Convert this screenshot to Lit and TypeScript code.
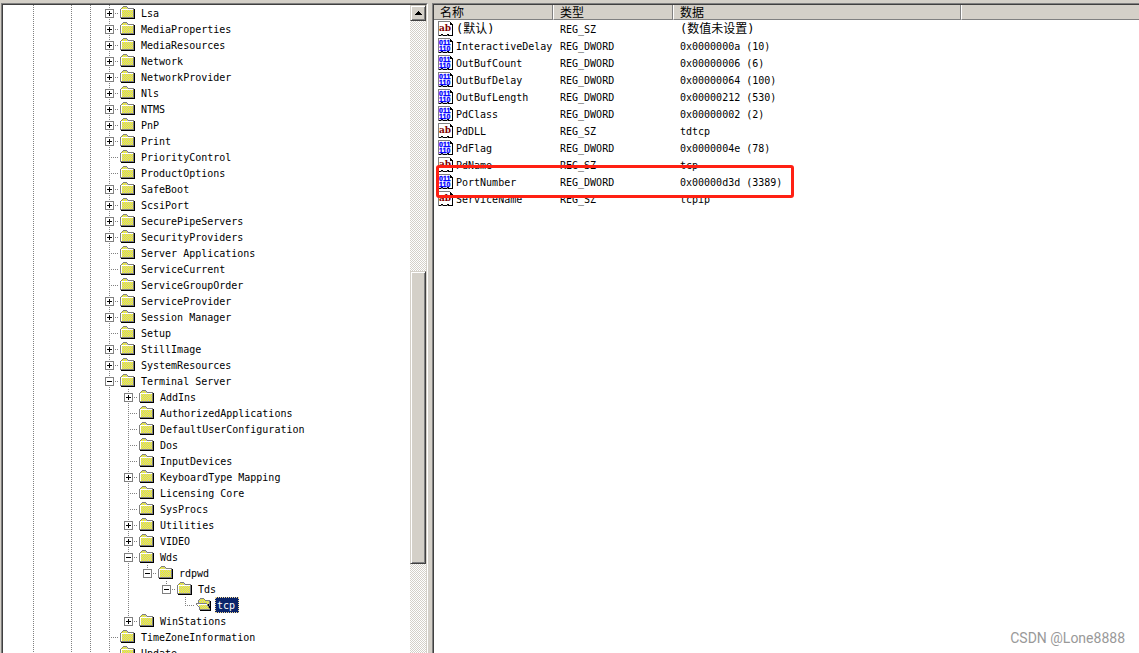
import { LitElement, html, svg, css, nothing } from "lit";
import { customElement, state } from "lit/decorators.js";
import { classMap } from "lit/directives/class-map.js";

interface KeyNode {
  name: string;
  closed?: boolean;
  children?: KeyNode[];
}

type Guide = "line" | "none";

const leaf = (name: string): KeyNode => ({ name });
const shut = (name: string): KeyNode => ({ name, closed: true });

const KEYS: KeyNode[] = [
  shut("Lsa"),
  shut("MediaProperties"),
  shut("MediaResources"),
  shut("Network"),
  shut("NetworkProvider"),
  shut("Nls"),
  shut("NTMS"),
  shut("PnP"),
  shut("Print"),
  leaf("PriorityControl"),
  leaf("ProductOptions"),
  shut("SafeBoot"),
  shut("ScsiPort"),
  shut("SecurePipeServers"),
  shut("SecurityProviders"),
  leaf("Server Applications"),
  leaf("ServiceCurrent"),
  leaf("ServiceGroupOrder"),
  shut("ServiceProvider"),
  shut("Session Manager"),
  leaf("Setup"),
  shut("StillImage"),
  shut("SystemResources"),
  {
    name: "Terminal Server",
    children: [
      shut("AddIns"),
      leaf("AuthorizedApplications"),
      leaf("DefaultUserConfiguration"),
      leaf("Dos"),
      leaf("InputDevices"),
      shut("KeyboardType Mapping"),
      leaf("Licensing Core"),
      leaf("SysProcs"),
      shut("Utilities"),
      shut("VIDEO"),
      {
        name: "Wds",
        children: [{ name: "rdpwd", children: [{ name: "Tds", children: [leaf("tcp")] }] }],
      },
      shut("WinStations"),
    ],
  },
  leaf("TimeZoneInformation"),
  leaf("Update"),
];

const VALUES: [string, string, string][] = [
  ["(默认)", "REG_SZ", "(数值未设置)"],
  ["InteractiveDelay", "REG_DWORD", "0x0000000a (10)"],
  ["OutBufCount", "REG_DWORD", "0x00000006 (6)"],
  ["OutBufDelay", "REG_DWORD", "0x00000064 (100)"],
  ["OutBufLength", "REG_DWORD", "0x00000212 (530)"],
  ["PdClass", "REG_DWORD", "0x00000002 (2)"],
  ["PdDLL", "REG_SZ", "tdtcp"],
  ["PdFlag", "REG_DWORD", "0x0000004e (78)"],
  ["PdName", "REG_SZ", "tcp"],
  ["PortNumber", "REG_DWORD", "0x00000d3d (3389)"],
  ["ServiceName", "REG_SZ", "tcpip"],
];

const MARKED = "PortNumber";

const dither = svg`<defs>
  <pattern id="dither" width="2" height="2" patternUnits="userSpaceOnUse">
    <rect width="2" height="2" fill="#ffff00"/>
    <rect width="1" height="1" fill="#c0c0c0"/>
    <rect x="1" y="1" width="1" height="1" fill="#c0c0c0"/>
  </pattern>
</defs>`;

const folderIcon = html`<svg class="icon" viewBox="0 0 16 16" width="16" height="16" shape-rendering="crispEdges" aria-hidden="true">
  ${dither}
  <path d="M3 1h4v1h1v1h6v10H0V4h1V3h1V2h1z" fill="#808080"/>
  <path d="M3 2h4v1h1v1h5v8H1V4h1V3h1z" fill="url(#dither)"/>
  <path d="M1 4h12v1H2v7H1z" fill="#fff"/>
  <path d="M14 4h1v10H1v-1h13z" fill="#000"/>
</svg>`;

const openFolderIcon = html`<svg class="icon" viewBox="0 0 16 16" width="16" height="16" shape-rendering="crispEdges" aria-hidden="true">
  ${dither}
  <path d="M4 1h4v1h1v1h5v10H3V9H2V3h1V2h1z" fill="#808080"/>
  <path d="M4 2h4v1h1v1h4v8H3V3h1z" fill="url(#dither)"/>
  <path d="M0 6h11v1h1v2h1v2h1v2H4v-1H3v-2H2V9H1V8H0z" fill="#808080"/>
  <path d="M1 7h10v2h1v2h1v1H4v-2H3V9H2V8H1z" fill="url(#dither)"/>
  <path d="M1 7h10v1H3v1H2V8H1z" fill="#fff"/>
  <path d="M14 4h1v10H4v-1h10v-2h-1V9h-1V7h1v2h1z" fill="#000"/>
</svg>`;

const page = svg`
  <path d="M0 0h12v1h1v1h1v13H0z" fill="#808080"/>
  <path d="M1 1h11v2h2v11h-3v-1H9v1H5v-1H3v1H1z" fill="#fff"/>
  <path d="M12 1h1v1h1v1h1v12h-3v-1h2V4h-2z" fill="#000"/>
  <path d="M1 14h2v-1h2v1h4v-1h2v1h2v1h-3v-1H9v1H5v-1H3v1H1z" fill="#000"/>`;

const stringIcon = html`<svg class="icon" viewBox="0 0 16 16" width="16" height="16" shape-rendering="crispEdges" aria-hidden="true">
  ${page}<text class="ab" x="1" y="10">ab</text>
</svg>`;

const binaryIcon = html`<svg class="icon" viewBox="0 0 16 16" width="16" height="16" shape-rendering="crispEdges" aria-hidden="true">
  ${page}<text class="bits" x="1" y="7">011</text><text class="bits" x="1" y="13">110</text>
</svg>`;

@customElement("registry-tree")
class RegistryTree extends LitElement {
  @state() private collapsed = new Set<string>();
  @state() private selected = "tcp";

  static styles = css`
    :host {
      display: flex;
      min-height: 0;
      min-width: 0;
      background: #fff;
      border: 1px solid #808080;
      border-right-color: #fff;
      border-bottom: 0;
      box-sizing: border-box;
    }
    .frame {
      display: flex;
      flex: 1;
      min-width: 0;
      border: 1px solid #404040;
      border-right-color: #d4d0c8;
      border-bottom: 0;
    }
    .tree {
      flex: 1;
      min-width: 0;
      padding-left: 21px;
      overflow: auto;
      scrollbar-width: none;
    }
    .row {
      display: flex;
      height: 16px;
      line-height: 18px;
      white-space: pre;
    }
    .cell {
      flex: none;
      display: grid;
      place-items: center;
      width: 19px;
      height: 16px;
      padding: 1px 0 0;
      box-sizing: border-box;
      background-repeat: no-repeat;
    }
    .line,
    .branch {
      background-image: repeating-linear-gradient(to bottom, #808080 0 1px, transparent 1px 2px);
      background-size: 1px 16px;
      background-position: 9px 0;
    }
    .branch {
      background-image: repeating-linear-gradient(to bottom, #808080 0 1px, transparent 1px 2px),
        repeating-linear-gradient(to right, #808080 0 1px, transparent 1px 2px);
      background-size: 1px 16px, 10px 1px;
      background-position: 9px 0, 9px 8px;
    }
    .branch.end {
      background-size: 1px 9px, 10px 1px;
    }
    .toggle {
      display: block;
      width: 9px;
      height: 9px;
      padding: 0;
      border: 1px solid #808080;
      outline: 1px solid #fff;
      background: linear-gradient(#000, #000) center / 5px 1px no-repeat #fff;
    }
    .toggle.closed {
      background: linear-gradient(#000, #000) center / 5px 1px no-repeat,
        linear-gradient(#000, #000) center / 1px 5px no-repeat #fff;
    }
    .icon {
      flex: none;
      display: block;
      margin: 0 3px 0 1px;
    }
    .label {
      height: 16px;
      padding: 0 4px 0 2px;
    }
    .selected .label {
      background: #0a246a;
      color: #fff;
      outline: 1px dotted #f5db95;
      outline-offset: -1px;
    }
    .scrollbar {
      flex: none;
      display: flex;
      flex-direction: column;
      width: 16px;
      background: repeating-conic-gradient(#d4d0c8 0 25%, #fff 0 50%) 0 0 / 2px 2px;
    }
    .up,
    .thumb {
      box-sizing: border-box;
      background: #d4d0c8;
      border: 1px solid;
      border-color: #d4d0c8 #404040 #404040 #d4d0c8;
      box-shadow: inset 1px 1px #fff, inset -1px -1px #808080;
    }
    .up {
      display: grid;
      place-items: center;
      height: 16px;
      padding: 0;
    }
    .before {
      flex: 251;
    }
    .thumb {
      flex: 292;
    }
    .after {
      flex: 89;
    }
  `;

  private toggle(name: string) {
    const next = new Set(this.collapsed);
    if (!next.delete(name)) next.add(name);
    this.collapsed = next;
  }

  private renderNode(node: KeyNode, guides: Guide[], last: boolean): unknown {
    const closed = node.closed || this.collapsed.has(node.name);
    const expandable = node.closed || !!node.children;
    const isSelected = this.selected === node.name;
    return html`
      <div
        class=${classMap({ row: true, selected: isSelected })}
        role="treeitem"
        aria-level=${guides.length}
        aria-selected=${isSelected}
        aria-expanded=${expandable ? String(!closed) : nothing}
        @click=${() => (this.selected = node.name)}
      >
        ${guides.map((g) => html`<span class="cell ${g}"></span>`)}
        <span class=${classMap({ cell: true, branch: true, end: last })}
          >${expandable
            ? html`<button
                class=${classMap({ toggle: true, closed: !!closed })}
                aria-label=${node.name}
                @click=${() => this.toggle(node.name)}
              ></button>`
            : nothing}</span
        >${isSelected ? openFolderIcon : folderIcon}<span class="label">${node.name}</span>
      </div>
      ${closed || !node.children
        ? nothing
        : this.renderNodes(node.children, [...guides, last ? "none" : "line"])}
    `;
  }

  private renderNodes(nodes: KeyNode[], guides: Guide[], more = false): unknown {
    return nodes.map((n, i) => this.renderNode(n, guides, !more && i === nodes.length - 1));
  }

  render() {
    return html`
      <div class="frame">
        <div class="tree" role="tree">
          ${this.renderNodes(KEYS, ["line", "none", "line", "line"], true)}
        </div>
        <div class="scrollbar">
          <button class="up" aria-label="Scroll up">
            <svg viewBox="0 0 7 4" width="7" height="4" shape-rendering="crispEdges">
              <path d="M3 0h1v1h1v1h1v1h1v1H0V3h1V2h1V1h1z" fill="#000" />
            </svg>
          </button>
          <div class="before"></div>
          <div class="thumb"></div>
          <div class="after"></div>
        </div>
      </div>
    `;
  }
}

@customElement("value-list")
class ValueList extends LitElement {
  static styles = css`
    :host {
      display: block;
      min-width: 0;
      background: #fff;
      border: solid #808080;
      border-width: 1px 0 0 1px;
    }
    .frame {
      height: 100%;
      box-sizing: border-box;
      border: solid #404040;
      border-width: 1px 0 0 1px;
    }
    table {
      width: 100%;
      table-layout: fixed;
      border-collapse: separate;
      border-spacing: 0;
    }
    .c-name {
      width: 119px;
    }
    .c-type {
      width: 120px;
    }
    .c-data {
      width: 288px;
    }
    th {
      height: 15px;
      box-sizing: border-box;
      padding: 2px 0 0 6px;
      background: #d4d0c8;
      border: solid #808080;
      border-width: 0 1px 1px 0;
      font-size: 12px;
      font-weight: 400;
      line-height: 12px;
      text-align: left;
    }
    th + th {
      border-left: 1px solid #fff;
    }
    th:last-child {
      border-right: 0;
    }
    td {
      height: 17px;
      box-sizing: border-box;
      padding: 2px 0 0 7px;
      line-height: 15px;
      white-space: nowrap;
    }
    .cjk .text {
      font-size: 12px;
    }
    td.name {
      position: relative;
      padding: 0 0 0 4px;
    }
    .entry {
      display: flex;
      gap: 2px;
      height: 17px;
    }
    .entry .text {
      padding-top: 2px;
    }
    .icon {
      flex: none;
      display: block;
      margin-top: 1px;
    }
    .ab {
      font: bold 9px "DejaVu Serif", serif;
      fill: #800000;
    }
    .bits {
      font: bold 7px "Liberation Sans", sans-serif;
      fill: #0000ff;
      stroke: #0000ff;
      stroke-width: 0.3;
    }
    .mark {
      position: absolute;
      z-index: 1;
      top: -8px;
      left: 2px;
      box-sizing: border-box;
      width: 358px;
      height: 33px;
      border: 3px solid #ff2013;
      border-radius: 3px;
      pointer-events: none;
    }
  `;

  render() {
    return html`
      <div class="frame">
        <table>
          <colgroup>
            <col class="c-name" />
            <col class="c-type" />
            <col class="c-data" />
            <col />
          </colgroup>
          <thead>
            <tr>
              <th>名称</th>
              <th>类型</th>
              <th>数据</th>
              <th></th>
            </tr>
          </thead>
          <tbody>
            ${VALUES.map(
              ([name, type, data], i) => html`<tr class=${i === 0 ? "cjk" : ""}>
                <td class="name">
                  <div class="entry">
                    ${type === "REG_SZ" ? stringIcon : binaryIcon}<span class="text">${name}</span>
                  </div>
                  ${name === MARKED ? html`<div class="mark"></div>` : nothing}
                </td>
                <td>${type}</td>
                <td><span class="text">${data}</span></td>
                <td></td>
              </tr>`
            )}
          </tbody>
        </table>
      </div>
    `;
  }
}

@customElement("app-root")
class AppRoot extends LitElement {
  static styles = css`
    :host {
      display: grid;
      grid-template-columns: 427px minmax(0, 1fr);
      column-gap: 4px;
      height: 100vh;
      padding: 3px 0 0 1px;
      box-sizing: border-box;
      overflow: hidden;
      background: #d4d0c8;
      color: #000;
      font: 10px "DejaVu Sans Mono", "Noto Sans CJK SC", monospace;
    }
    .watermark {
      position: absolute;
      right: 14px;
      bottom: 6px;
      color: #999;
      font: 14px/18px Roboto, sans-serif;
    }
  `;

  render() {
    return html`
      <registry-tree></registry-tree>
      <value-list></value-list>
      <span class="watermark">CSDN @Lone8888</span>
    `;
  }
}
